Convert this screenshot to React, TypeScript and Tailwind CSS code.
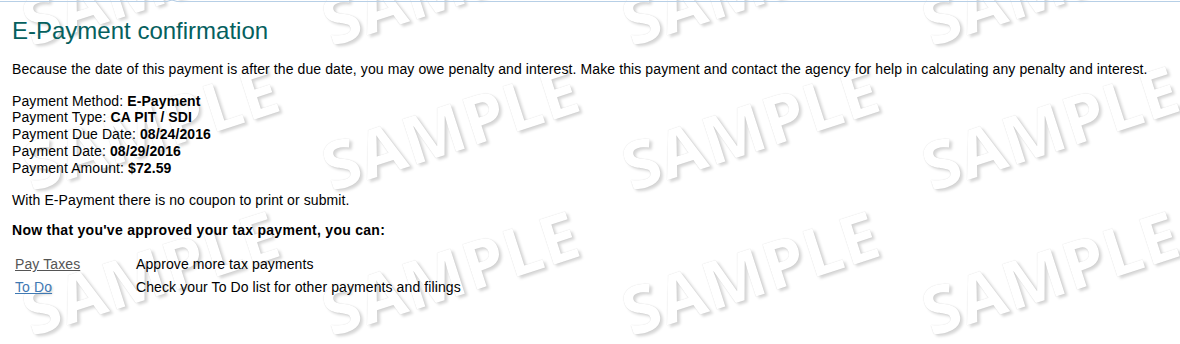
const details = [
  { label: "Payment Method", value: "E-Payment" },
  { label: "Payment Type", value: "CA PIT / SDI" },
  { label: "Payment Due Date", value: "08/24/2016" },
  { label: "Payment Date", value: "08/29/2016" },
  { label: "Payment Amount", value: "$72.59" },
];

const marks = Array.from({ length: 12 });

function Watermark() {
  return (
    <div className="pointer-events-none absolute inset-0 overflow-hidden">
      <div className="grid w-[1200px] grid-cols-4 auto-rows-[145px] -mt-[92px]">
        {marks.map((_, i) => (
          <div key={i} className="flex items-center justify-center">
            <span className="-rotate-[18deg] font-['Open_Sans',sans-serif] text-[66px] font-bold leading-none tracking-[1px] text-white [text-shadow:0_0_1px_rgba(0,0,0,0.18),2px_3px_3px_rgba(0,0,0,0.16)]">
              SAMPLE
            </span>
          </div>
        ))}
      </div>
    </div>
  );
}

export default function App() {
  return (
    <div className="relative h-[344px] w-full overflow-hidden bg-white font-['Liberation_Sans',Arial,sans-serif] text-[14px] leading-[1.2] tracking-[0.1px] text-black">
      <Watermark />
      {/* top rule with tab pointer */}
      <div className="absolute left-0 right-0 top-0 h-[3px]">
        <svg width="1180" height="3" className="block">
          <path d="M0 1.5 H167 L172 0 L177 1.5 H1180" stroke="#b7cfe6" strokeWidth="1.2" fill="none" />
        </svg>
      </div>

      <div className="relative pl-[12px] pt-[17px]">
        <h1 className="text-[24px] font-normal leading-[1.2] tracking-normal text-[#05605e]">E-Payment confirmation</h1>

        <p className="mt-[15px]">
          Because the date of this payment is after the due date, you may owe penalty and interest. Make this
          payment and contact the agency for help in calculating any penalty and interest.
        </p>

        <div className="mt-[15px]">
          {details.map((d) => (
            <div key={d.label}>
              {d.label}: <b>{d.value}</b>
            </div>
          ))}
        </div>

        <p className="mt-[15px]">With E-Payment there is no coupon to print or submit.</p>

        <p className="mt-[14px] font-bold tracking-[0.28px]">Now that you've approved your tax payment, you can:</p>

        <table className="mt-[14px] border-collapse">
          <tbody>
            <tr>
              <td className="w-[121px] px-[3px] py-[3px]">
                <a className="text-[#555555] underline">Pay Taxes</a>
              </td>
              <td className="px-[3px] py-[3px]">Approve more tax payments</td>
            </tr>
            <tr>
              <td className="w-[121px] px-[3px] py-[3px]">
                <a className="text-[#3f79b3] underline">To Do</a>
              </td>
              <td className="px-[3px] py-[3px]">Check your To Do list for other payments and filings</td>
            </tr>
          </tbody>
        </table>
      </div>
    </div>
  );
}
